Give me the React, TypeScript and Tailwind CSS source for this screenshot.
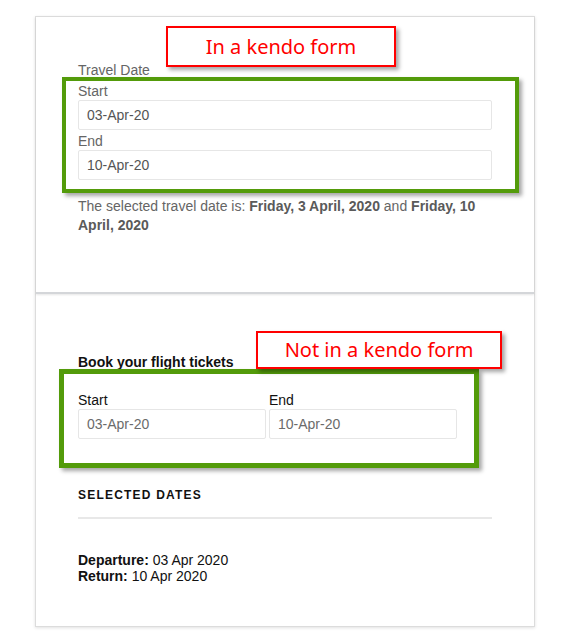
import React from 'react'

const font = { fontFamily: '"Liberation Sans", Arial, sans-serif' }

function DateBox({ value, className = '' }: { value: string; className?: string }) {
  return (
    <div
      className={`h-[30px] flex items-center px-2 border border-[#e6e6e6] rounded-[2px] bg-white text-[14px] ${className}`}
    >
      {value}
    </div>
  )
}

function Note({ text, className }: { text: string; className: string }) {
  return (
    <div
      className={`absolute flex items-center justify-center bg-white border-2 border-[#ff0000] text-[#ff0000] text-[20px] shadow-[3px_3px_4px_rgba(0,0,0,0.35)] ${className}`}
      style={{ fontFamily: '"Noto Sans", "Open Sans", sans-serif' }}
    >
      {text}
    </div>
  )
}

export default function App() {
  return (
    <div className="relative min-h-[635px] bg-white" style={font}>
      <div className="pt-4 pl-[35px]">
        <div className="w-[500px] border border-[#dcdcdc] shadow-[0_1px_3px_rgba(0,0,0,0.12)]">
          {/* kendo form */}
          <div className="h-[277px] px-[42px] pt-[45px] border-b-2 border-[#d4d6d9] text-[#656565] text-[14px] shadow-[0_1px_2px_rgba(0,0,0,0.1)]">
            <div className="leading-4">Travel Date</div>
            <div className="leading-4 mt-[5px]">Start</div>
            <DateBox value="03-Apr-20" className="mt-px text-[#555]" />
            <div className="leading-4 mt-[3px]">End</div>
            <DateBox value="10-Apr-20" className="mt-px text-[#555]" />
            <p className="mt-[17px] leading-[19px]">
              The selected travel date is: <b className="text-[#5a5a5a]">Friday, 3 April, 2020</b> and{' '}
              <b className="text-[#5a5a5a]">Friday, 10 April, 2020</b>
            </p>
          </div>

          {/* plain form */}
          <div className="px-[42px] pt-[61px] pb-[42px] text-[#111]">
            <h3 className="text-[14px] font-bold leading-[15px]">Book your flight tickets</h3>
            <div className="flex gap-[3px] mt-[22px] text-[14px]">
              <div className="w-[188px]">
                <div className="leading-4">Start</div>
                <DateBox value="03-Apr-20" className="mt-px text-[#6b6b6b]" />
              </div>
              <div className="w-[188px]">
                <div className="leading-4">End</div>
                <DateBox value="10-Apr-20" className="mt-px text-[#6b6b6b]" />
              </div>
            </div>
            <div className="mt-[49px] text-[12px] font-bold leading-[15px] tracking-[1.2px] uppercase">
              Selected Dates
            </div>
            <div className="mt-[14px] h-[2px] bg-[#e8e8e8]" />
            <div className="mt-[33px] text-[14px] leading-4">
              <div>
                <b>Departure:</b> 03 Apr 2020
              </div>
              <div>
                <b>Return:</b> 10 Apr 2020
              </div>
            </div>
          </div>
        </div>
      </div>

      {/* annotations */}
      <div className="absolute left-[62px] top-[77px] w-[457px] h-[116px] border-4 border-[#539b0a] shadow-[3px_3px_4px_rgba(0,0,0,0.35)]" />
      <div className="absolute left-[59px] top-[369px] w-[420px] h-[99px] border-[5px] border-[#539b0a] shadow-[3px_3px_4px_rgba(0,0,0,0.35)]" />
      <Note text="In a kendo form" className="left-[166px] top-[26px] w-[230px] h-[41px]" />
      <Note text="Not in a kendo form" className="left-[256px] top-[331px] w-[246px] h-[38px]" />
    </div>
  )
}
